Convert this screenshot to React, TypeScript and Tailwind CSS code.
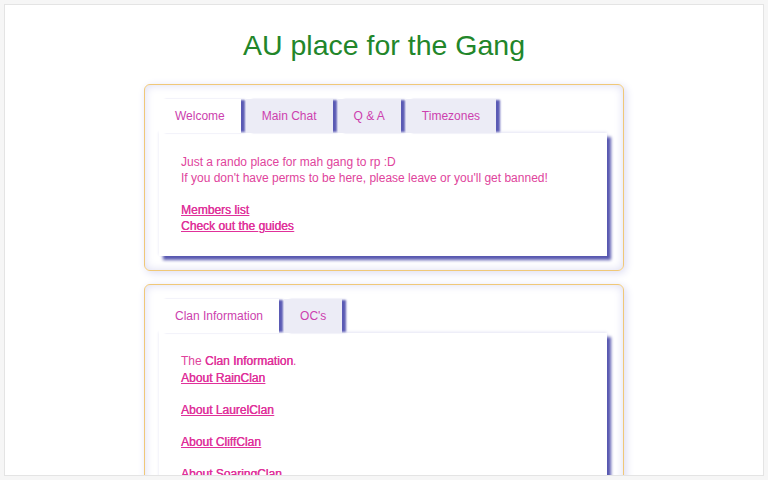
const tabBase =
  'h-[34px] px-[16px] mr-[5px] text-[12px] leading-[34px] text-[#cc3fae] shadow-[5px_0_2px_-1px_#5a5ab4]';

function Tabs({ items, active }: { items: string[]; active: number }) {
  return (
    <div className="flex">
      {items.map((t, i) => (
        <div key={t} className={`${tabBase} ${i === active ? 'bg-white' : 'bg-[#ececf6]'}`}>
          {t}
        </div>
      ))}
    </div>
  );
}

function Box({ children, className = '' }: { children: React.ReactNode; className?: string }) {
  return (
    <div
      className={`mx-auto w-[480px] rounded-[6px] border border-[#f0c878] pl-[14px] pr-[16px] pt-[14px] pb-[14px] shadow-[inset_0_0_10px_#dcdcf2,2px_2px_8px_#dcdcf2] ${className}`}
    >
      {children}
    </div>
  );
}

const link = 'text-[#e0309a] underline [text-shadow:0.35px_0_0_#e0309a]';

export default function App() {
  return (
    <div className="w-[768px] h-[480px] bg-[#f6f6f6] p-[4px]">
      <div
        className="h-full overflow-hidden border border-[#e4e4e4] bg-white"
        style={{ fontFamily: '"Liberation Sans", Arial, sans-serif' }}
      >
        <h1 className="pt-[20px] text-center text-[28.5px] leading-[40px] text-[#22862a]">
          AU place for the Gang
        </h1>

        <Box className="mt-[19px]">
          <Tabs items={['Welcome', 'Main Chat', 'Q & A', 'Timezones']} active={0} />
          <div className="bg-white pl-[22px] pr-4 pt-[21px] pb-[22px] text-[12px] leading-4 text-[#e0449c] shadow-[4px_4px_3px_#5858b0,0_-1px_3px_#e4e4f4]">
            <p>Just a rando place for mah gang to rp :D</p>
            <p>If you don't have perms to be here, please leave or you'll get banned!</p>
            <p className="mt-4">
              <a className={link}>Members list</a>
            </p>
            <p>
              <a className={link}>Check out the guides</a>
            </p>
          </div>
        </Box>

        <Box className="mt-[13px]">
          <Tabs items={['Clan Information', "OC's"]} active={0} />
          <div className="bg-white pl-[22px] pr-4 pt-[20px] pb-[22px] text-[12px] leading-4 text-[#e0449c] shadow-[4px_4px_3px_#5858b0,0_-1px_3px_#e4e4f4]">
            <p>
              The <span className="text-[#e0309a] [text-shadow:0.35px_0_0_#e0309a]">Clan Information</span>.
            </p>
            <p className="mt-[1px]">
              <a className={link}>About RainClan</a>
            </p>
            <p className="mt-4">
              <a className={link}>About LaurelClan</a>
            </p>
            <p className="mt-4">
              <a className={link}>About CliffClan</a>
            </p>
            <p className="mt-4">
              <a className={link}>About SoaringClan</a>
            </p>
          </div>
        </Box>
      </div>
    </div>
  );
}
